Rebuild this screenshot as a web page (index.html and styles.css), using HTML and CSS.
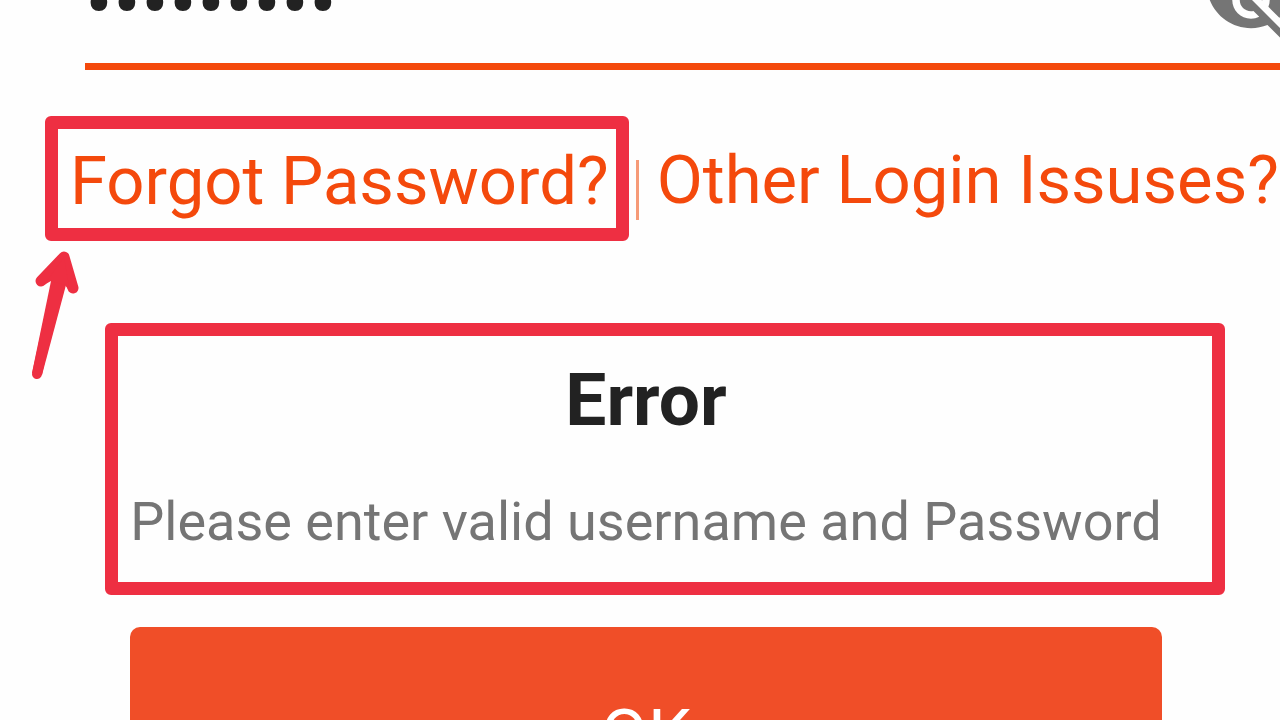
FILE: index.html
```
<!DOCTYPE html>
<html lang="en">
<head>
    <meta charset="UTF-8">
    <meta name="viewport" content="width=device-width, initial-scale=1.0">
    <title>Login</title>
    <link rel="stylesheet" href="styles.css">
</head>
<body>
    <div class="field">
        <input type="password" id="password" aria-label="Password" value="123456789">
        <button type="button" class="toggle" aria-label="Show password">
            <svg viewBox="0 0 24 24" width="90" height="90">
                <path fill="#757575" d="M12 7c2.76 0 5 2.24 5 5 0 .65-.13 1.26-.36 1.83l2.92 2.92c1.51-1.26 2.7-2.89 3.43-4.75-1.73-4.39-6-7.5-11-7.5-1.4 0-2.74.25-3.98.7l2.16 2.16C10.74 7.13 11.35 7 12 7zM2 4.27l2.28 2.28.46.46C3.08 8.3 1.78 10.02 1 12c1.73 4.39 6 7.5 11 7.5 1.55 0 3.03-.3 4.38-.84l.42.42L19.73 22 21 20.73 3.27 3 2 4.27zM7.53 9.8l1.55 1.55c-.05.21-.08.43-.08.65 0 1.66 1.34 3 3 3 .22 0 .44-.03.65-.08l1.55 1.55c-.67.33-1.41.53-2.2.53-2.76 0-5-2.24-5-5 0-.79.2-1.53.53-2.2zm4.31-.78l3.15 3.15.02-.16c0-1.66-1.34-3-3-3l-.17.01z"/>
            </svg>
        </button>
    </div>

    <div class="links">
        <a href="#" class="forgot">Forgot Password?</a>
        <span class="divider"></span>
        <a href="#" class="other">Other Login Issuses?</a>
        <!-- arrow pointing at the forgot password link -->
        <svg class="arrow" viewBox="0 0 50 136" width="50" height="136">
            <path d="M7 128L28 32" stroke="#ee2f42" stroke-width="10" stroke-linecap="round"/>
            <path d="M2 127L21 35L34 11L36 39L12 129Z" fill="#ee2f42"/>
            <path d="M11 35L34 11L43 42" stroke="#ee2f42" stroke-width="11" stroke-linecap="round" stroke-linejoin="round"/>
            <path d="M14 39L34 11L40 46L35 39L21 35Z" fill="#ee2f42"/>
        </svg>
    </div>

    <div class="error">
        <h1>Error</h1>
        <p>Please enter valid username and Password</p>
    </div>

    <button type="button" class="ok">OK</button>
</body>
</html>
```
FILE: styles.css
```
* {
    box-sizing: border-box;
}
body {
    margin: 0;
    background-color: #fefefe;
    font-family: Roboto, sans-serif;
    overflow: hidden;
}
.field {
    display: flex;
    align-items: center;
    height: 129px;
    margin: -59px -16px 0 85px;
    border-bottom: 7px solid #f4490c;
}
.field input {
    flex: 1;
    min-width: 0;
    padding: 4px 0 0;
    border: none;
    outline: none;
    background: none;
    color: #222;
    font-family: inherit;
    font-size: 83px;
}
.toggle {
    display: flex;
    padding: 0 0 4px;
    border: none;
    background: none;
    cursor: pointer;
}
.links {
    position: relative;
    display: flex;
    align-items: center;
    margin: 46px 0 0 45px;
    font-size: 67px;
    white-space: nowrap;
}
.links a {
    color: #f4490c;
    text-decoration: none;
}
.forgot {
    padding: 5px 7px 0 12px;
    border: 13px solid #ee2f42;
    border-radius: 6px;
    line-height: 94px;
}
.other {
    padding-top: 3px;
}
.divider {
    width: 3px;
    height: 60px;
    margin: 22px 18px 0 7px;
    background-color: #f69a77;
}
.arrow {
    position: absolute;
    top: 130px;
    left: -15px;
    fill: none;
}
.error {
    margin: 82px 55px 0 105px;
    padding: 22px 38px 28px 0;
    border: 13px solid #ee2f42;
    border-radius: 6px;
    text-align: center;
}
.error h1 {
    margin: 0;
    color: #222;
    font-size: 73px;
    line-height: 84px;
}
.error p {
    margin: 48px 0 0;
    color: #757575;
    font-size: 54px;
    line-height: 64px;
    white-space: nowrap;
}
.ok {
    display: block;
    width: calc(100% - 248px);
    height: 214px;
    margin: 32px 118px 0 130px;
    border: none;
    border-radius: 10px;
    background-color: #f04e28;
    color: #fff;
    font-family: inherit;
    font-size: 69px;
    cursor: pointer;
}
```
